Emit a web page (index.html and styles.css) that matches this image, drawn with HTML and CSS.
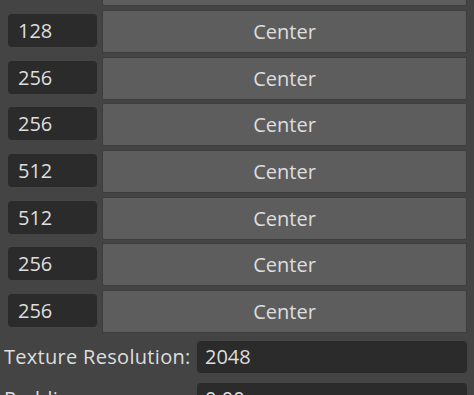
FILE: index.html
```html
<!DOCTYPE html>
<html>
<head>
<meta charset="utf-8">
<link rel="stylesheet" href="styles.css">
</head>
<body>
<div class="list">
  <div class="row"><div class="num">128</div><div class="btn">Center</div></div>
  <div class="row"><div class="num">128</div><div class="btn">Center</div></div>
  <div class="row"><div class="num">256</div><div class="btn">Center</div></div>
  <div class="row"><div class="num">256</div><div class="btn">Center</div></div>
  <div class="row"><div class="num">512</div><div class="btn">Center</div></div>
  <div class="row"><div class="num">512</div><div class="btn">Center</div></div>
  <div class="row"><div class="num">256</div><div class="btn">Center</div></div>
  <div class="row"><div class="num">256</div><div class="btn">Center</div></div>
</div>
<div class="props">
  <div class="prop"><span class="label">Texture Resolution:</span><div class="field">2048</div></div>
  <div class="prop"><span class="label">Padding:</span><div class="field">0.00</div></div>
</div>
</body>
</html>
```
FILE: styles.css
```css
html, body {
  margin: 0;
  padding: 0;
  background: #444444;
  overflow: hidden;
  font-family: "Open Sans", "Noto Sans", sans-serif;
  font-size: 20px;
  color: #dedede;
}
.list {
  margin-top: -36.67px;
  display: flex;
  flex-direction: column;
  gap: 3.67px;
}
.row {
  height: 43px;
  display: flex;
  align-items: center;
}
.num {
  margin-left: 8px;
  width: 89px;
  height: 33px;
  margin-top: -2px;
  background: #2b2b2b;
  border-radius: 4px;
  box-sizing: border-box;
  padding-left: 10px;
  padding-top: 1px;
  display: flex;
  align-items: center;
  line-height: 1;
}
.btn {
  margin-left: 5px;
  width: 365px;
  height: 43px;
  box-sizing: border-box;
  background: #5d5d5d;
  border: 1px solid #3e3e3e;
  border-radius: 2px;
  padding-top: 1px;
  display: flex;
  align-items: center;
  justify-content: center;
  line-height: 1;
}
.props {
  margin-top: 8px;
  display: flex;
  flex-direction: column;
  gap: 10px;
}
.prop {
  display: flex;
  align-items: center;
  height: 32px;
}
.label {
  width: 197px;
  padding-left: 4px;
  box-sizing: border-box;
  white-space: nowrap;
  letter-spacing: 0.3px;
}
.field {
  width: 270px;
  height: 32px;
  background: #2b2b2b;
  border-radius: 4px;
  box-sizing: border-box;
  padding-left: 8px;
  padding-top: 1px;
  display: flex;
  align-items: center;
  line-height: 1;
}
```
